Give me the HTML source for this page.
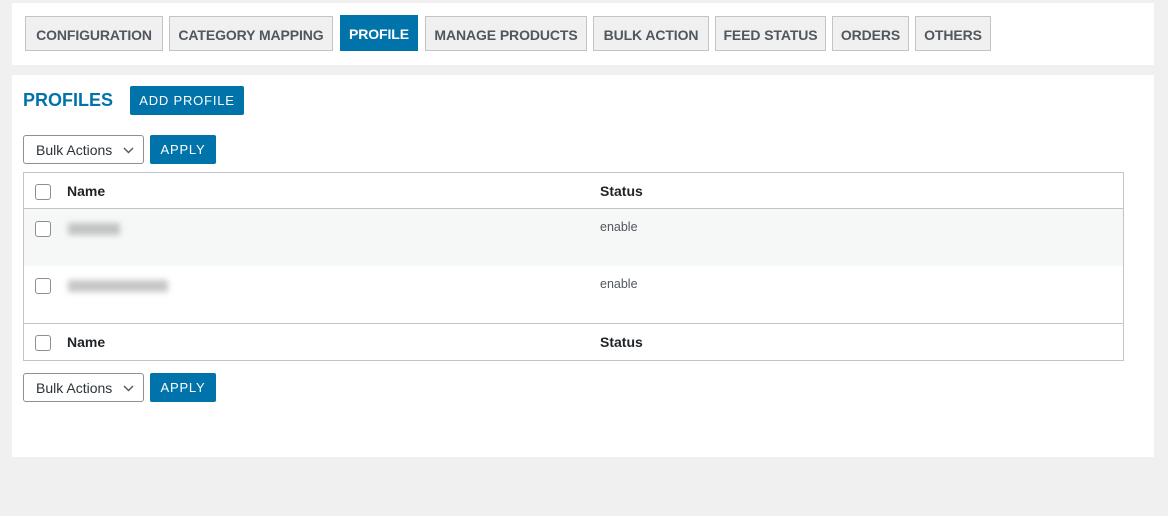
<!DOCTYPE html>
<html><head><style>
*{box-sizing:border-box;margin:0;padding:0}
body{width:1168px;height:516px;background:#f0f0f1;font-family:"Liberation Sans",sans-serif;position:relative;overflow:hidden;color:#3c434a}
.a{position:absolute}
.panel{background:#fff}
.tab{position:absolute;top:16px;height:35px;background:#f0f0f1;border:1px solid #c3c4c7;font-weight:bold;font-size:14px;color:#50575e;display:flex;align-items:center;justify-content:center;letter-spacing:-0.1px;padding-top:2px}
.tab.on{background:#0073aa;color:#fff;border-color:#0073aa;top:15px}
.btn{position:absolute;background:#0073aa;color:#fff;font-size:13px;display:flex;align-items:center;justify-content:center;letter-spacing:0.8px;border-radius:2px}
.sel{position:absolute;border:1px solid #8c8f94;border-radius:3px;background:#fff;font-size:14px;color:#2c3338;display:flex;align-items:center;padding-left:12px}
.sel svg{position:absolute;right:9px;top:11px}
.cb{position:absolute;left:35px;width:16px;height:16px;border:1px solid #8c8f94;border-radius:3px;background:#fff}
.th{position:absolute;font-weight:bold;font-size:14px;color:#1d2327}
.td{position:absolute;font-size:12.5px;color:#50575e}
.blur{position:absolute;background:#999;filter:blur(3px);height:12px;opacity:.55}
</style></head><body>
<div class="a panel" style="left:12px;top:3px;width:1142px;height:62px"></div>
<div class="tab" style="left:25px;width:138px">CONFIGURATION</div>
<div class="tab" style="left:169px;width:164px">CATEGORY MAPPING</div>
<div class="tab on" style="left:340px;width:78px;height:36px">PROFILE</div>
<div class="tab" style="left:425px;width:162px">MANAGE PRODUCTS</div>
<div class="tab" style="left:593px;width:116px">BULK ACTION</div>
<div class="tab" style="left:715px;width:111px">FEED STATUS</div>
<div class="tab" style="left:832px;width:77px">ORDERS</div>
<div class="tab" style="left:915px;width:76px">OTHERS</div>

<div class="a panel" style="left:12px;top:75px;width:1142px;height:382px"></div>
<div class="a" style="left:23px;top:90px;font-size:18px;font-weight:bold;color:#0073aa">PROFILES</div>
<div class="btn" style="left:130px;top:86px;width:114px;height:29px">ADD PROFILE</div>

<div class="sel" style="left:23px;top:135px;width:121px;height:29px">Bulk Actions<svg width="11" height="7"><path d="M1 1l4.5 4.5L10 1" fill="none" stroke="#50575e" stroke-width="1.4"/></svg></div>
<div class="btn" style="left:150px;top:135px;width:66px;height:29px">APPLY</div>

<div class="a" style="left:23px;top:172px;width:1101px;height:189px;border:1px solid #c3c4c7;background:#fff"></div>
<div class="a" style="left:24px;top:208px;width:1099px;height:1px;background:#c3c4c7"></div>
<div class="a" style="left:24px;top:209px;width:1099px;height:57px;background:#f6f7f7"></div>
<div class="a" style="left:24px;top:323px;width:1099px;height:1px;background:#c3c4c7"></div>
<div class="cb" style="top:184px"></div><div class="th" style="left:67px;top:183px">Name</div><div class="th" style="left:600px;top:183px">Status</div>
<div class="cb" style="top:221px"></div><div class="blur" style="left:68px;top:223px;width:52px"></div><div class="td" style="left:600px;top:220px">enable</div>
<div class="cb" style="top:278px"></div><div class="blur" style="left:68px;top:280px;width:100px"></div><div class="td" style="left:600px;top:277px">enable</div>
<div class="cb" style="top:335px"></div><div class="th" style="left:67px;top:334px">Name</div><div class="th" style="left:600px;top:334px">Status</div>

<div class="sel" style="left:23px;top:373px;width:121px;height:29px">Bulk Actions<svg width="11" height="7"><path d="M1 1l4.5 4.5L10 1" fill="none" stroke="#50575e" stroke-width="1.4"/></svg></div>
<div class="btn" style="left:150px;top:373px;width:66px;height:29px">APPLY</div>
</body></html>
